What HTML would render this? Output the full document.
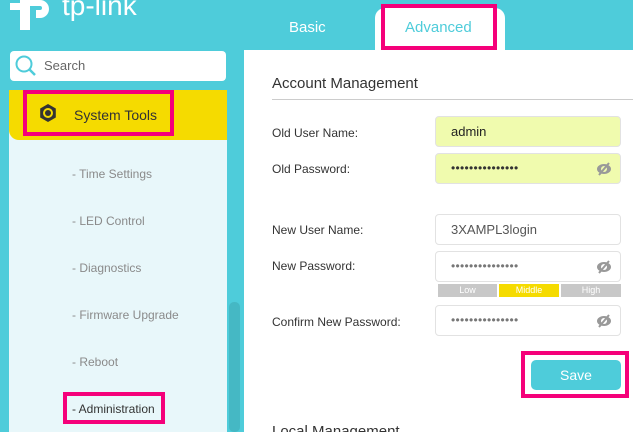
<!DOCTYPE html>
<html><head><style>
*{margin:0;padding:0;box-sizing:border-box}
html,body{width:633px;height:432px;overflow:hidden}
body{background:#4ECCDA;font-family:"Liberation Sans",sans-serif;position:relative}
.abs{position:absolute}
.lbl{position:absolute;left:272px;font-size:12px;color:#333}
.inp{position:absolute;left:435px;width:186px;height:31px;border:1px solid #e2e2e2;border-radius:4px;background:#fff;font-size:13px;color:#555;padding-left:15px;line-height:29px}
.y{background:#F0FBAE}
.dots{font-size:12px;letter-spacing:0.3px;color:#333}
.eye{position:absolute;right:8px;top:7px}
.sub{position:absolute;left:72px;font-size:12px;color:#8a8a8a}
</style></head><body>
<svg class="abs" style="left:8px;top:0" width="50" height="32" viewBox="0 0 50 32"><path d="M2 3h12v7H2z M12 0h10v30h-10z" fill="#fff"/><path d="M22 0h10a9 9 0 0 1 0 18h-4v-8h4a2 2 0 0 0 0-4h-10z" fill="#fff"/></svg>
<div class="abs" style="left:62px;top:-10px;font-size:28px;color:#fff">tp-link</div>
<div class="abs" style="left:289px;top:19px;font-size:15px;color:#fff">Basic</div>
<div class="abs" style="left:375px;top:8px;width:130px;height:44px;background:#fff;border-radius:10px 10px 0 0"></div>
<div class="abs" style="left:381px;top:4px;width:116px;height:46px;border:4px solid #F5007A"></div>
<div class="abs" style="left:405px;top:19px;font-size:15px;color:#4ECCDA">Advanced</div>
<div class="abs" style="left:10px;top:51px;width:216px;height:30px;background:#fff;border-radius:4px"></div>
<svg class="abs" style="left:14px;top:54px" width="24" height="24"><circle cx="10" cy="10" r="7.5" fill="none" stroke="#4ECCDA" stroke-width="2"/><path d="M15.5 15.5L21 21" stroke="#4ECCDA" stroke-width="2.5"/></svg>
<div class="abs" style="left:44px;top:58px;font-size:13px;color:#666">Search</div>
<div class="abs" style="left:9px;top:90px;width:218px;height:342px;background:#E8F7FA"></div>
<div class="abs" style="left:9px;top:90px;width:218px;height:50px;background:#F5DB00;border-radius:0 0 0 10px"></div>
<div class="abs" style="left:23px;top:90px;width:151px;height:46px;border:4px solid #F5007A"></div>
<svg class="abs" style="left:38px;top:103px" width="20" height="20" viewBox="0 0 20 20"><polygon points="10,1 17.8,5.5 17.8,14.5 10,19 2.2,14.5 2.2,5.5" fill="#333"/><circle cx="10" cy="10" r="5" fill="#F5DB00"/><circle cx="10" cy="10" r="3" fill="#333"/></svg>
<div class="abs" style="left:74px;top:107px;font-size:14px;color:#333">System Tools</div>
<div class="sub" style="top:167px">- Time Settings</div>
<div class="sub" style="top:214px">- LED Control</div>
<div class="sub" style="top:261px">- Diagnostics</div>
<div class="sub" style="top:308px">- Firmware Upgrade</div>
<div class="sub" style="top:355px">- Reboot</div>
<div class="abs" style="left:63px;top:392px;width:102px;height:32px;border:4px solid #F5007A"></div>
<div class="sub" style="top:402px;color:#333">- Administration</div>
<div class="abs" style="left:229px;top:302px;width:11px;height:130px;background:#45B8C4;border-radius:5px"></div>
<div class="abs" style="left:244px;top:50px;width:389px;height:382px;background:#fff"></div>
<div class="abs" style="left:272px;top:75px;font-size:15px;color:#333">Account Management</div>
<div class="abs" style="left:272px;top:99px;width:361px;height:1px;background:#ccc"></div>
<div class="lbl" style="top:126px">Old User Name:</div>
<div class="lbl" style="top:162px">Old Password:</div>
<div class="lbl" style="top:223px">New User Name:</div>
<div class="lbl" style="top:259px">New Password:</div>
<div class="lbl" style="top:315px">Confirm New Password:</div>
<div class="inp y" style="top:116px;color:#222">admin</div>
<div class="inp y dots" style="top:153px">•••••••••••••••<svg class="eye" width="16" height="16"><ellipse cx="8" cy="8" rx="7" ry="5" fill="#999"/><ellipse cx="8" cy="8" rx="3" ry="3" fill="#F0FBAE"/><path d="M13 2L3 14" stroke="#999" stroke-width="2"/></svg></div>
<div class="inp" style="top:214px">3XAMPL3login</div>
<div class="inp dots" style="top:251px;color:#777">•••••••••••••••<svg class="eye" width="16" height="16"><ellipse cx="8" cy="8" rx="7" ry="5" fill="#999"/><ellipse cx="8" cy="8" rx="3" ry="3" fill="#fff"/><path d="M13 2L3 14" stroke="#999" stroke-width="2"/></svg></div>
<div class="abs" style="left:438px;top:284px;width:59px;height:13px;background:#c8c8c8;color:#fff;font-size:9px;text-align:center;line-height:13px">Low</div>
<div class="abs" style="left:499px;top:284px;width:60px;height:13px;background:#F5DB00;color:#fff;font-size:9px;text-align:center;line-height:13px">Middle</div>
<div class="abs" style="left:561px;top:284px;width:60px;height:13px;background:#c8c8c8;color:#fff;font-size:9px;text-align:center;line-height:13px">High</div>
<div class="inp dots" style="top:305px;color:#777">•••••••••••••••<svg class="eye" width="16" height="16"><ellipse cx="8" cy="8" rx="7" ry="5" fill="#999"/><ellipse cx="8" cy="8" rx="3" ry="3" fill="#fff"/><path d="M13 2L3 14" stroke="#999" stroke-width="2"/></svg></div>
<div class="abs" style="left:521px;top:351px;width:108px;height:47px;border:4px solid #F5007A"></div>
<div class="abs" style="left:531px;top:360px;width:90px;height:30px;background:#4ECCDA;border-radius:5px;color:#fff;font-size:14px;text-align:center;line-height:30px">Save</div>
<div class="abs" style="left:272px;top:423px;font-size:15px;color:#333">Local Management</div>
</body></html>
